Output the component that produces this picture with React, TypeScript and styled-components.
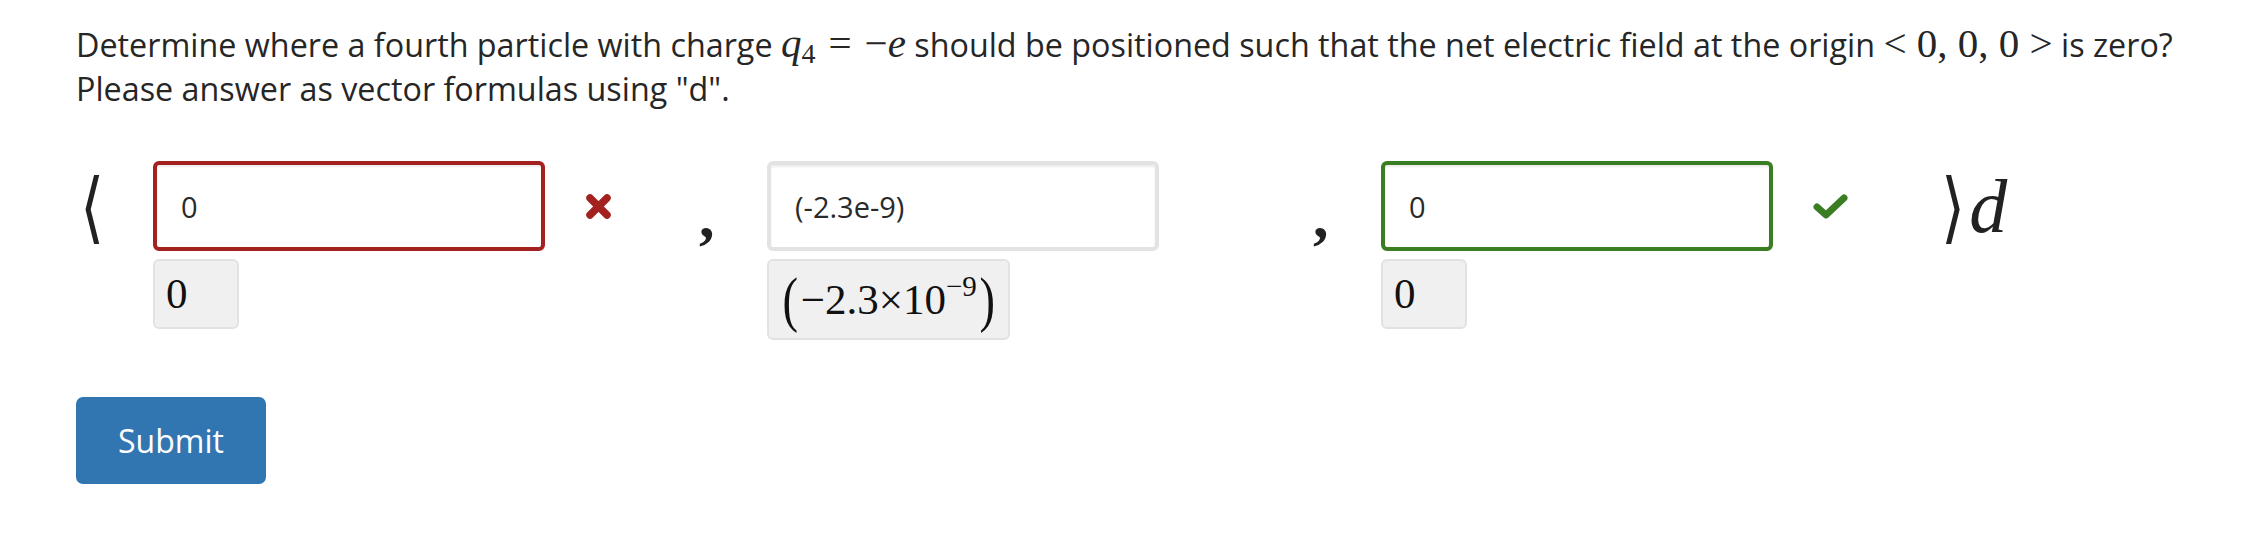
import React from "react";
import styled, { createGlobalStyle } from "styled-components";

const GlobalStyle = createGlobalStyle`
  body {
    margin: 0;
    background: #fff;
    font-family: "Open Sans", "Liberation Sans", sans-serif;
    color: #262626;
  }
`;

const RED = "#a3221f";
const GREEN = "#3b7d23";

const Page = styled.div`
  padding: 22px 30px 40px 76px;
`;

const Question = styled.p`
  margin: 0;
  font-size: 32.3px;
  line-height: 44px;
`;

const M = styled.span`
  font-family: "Liberation Serif", "DejaVu Serif", serif;
  font-size: 41px;
  line-height: 1;
`;

const Mi = styled.i`
  font-family: "Liberation Serif", "DejaVu Serif", serif;
  font-size: 41px;
  line-height: 1;
`;

const Sub = styled.sub`
  font-size: 28px;
  vertical-align: -6px;
  line-height: 0;
`;

const Op = styled.span`
  font-family: "Liberation Serif", "DejaVu Serif", serif;
  font-size: 41px;
  line-height: 1;
  margin: 0 13px;
`;

const AnswerRow = styled.div`
  display: flex;
  align-items: flex-start;
  margin-top: 51px;
`;

const Angle = styled.span<{ $side: "left" | "right" }>`
  display: flex;
  align-items: center;
  justify-content: flex-start;
  height: 90px;
  width: ${(p) => (p.$side === "left" ? "77px" : "auto")};
  padding-left: ${(p) => (p.$side === "left" ? "4px" : "0")};
  box-sizing: border-box;
  font-family: "DejaVu Sans", sans-serif;
  font-size: 62px;
  color: #222;
  transform: scaleY(1.25);
  transform-origin: center;
`;

const Dee = styled.i`
  display: flex;
  align-items: center;
  height: 90px;
  margin-left: 4px;
  font-family: "Liberation Serif", serif;
  font-size: 76px;
  color: #222;
`;

const Field = styled.div`
  display: flex;
  align-items: flex-start;
`;

const Stack = styled.div`
  display: flex;
  flex-direction: column;
  align-items: flex-start;
  gap: 8px;
`;

const Input = styled.input<{ $state?: "wrong" | "right" }>`
  width: 392px;
  height: 90px;
  box-sizing: border-box;
  padding: 0 24px;
  border: 4px solid
    ${(p) => (p.$state === "wrong" ? RED : p.$state === "right" ? GREEN : "#e3e3e3")};
  border-radius: 6px;
  box-shadow: inset 0 2px 2px rgba(0, 0, 0, 0.075);
  background: #fff;
  font-family: "Open Sans", sans-serif;
  font-size: 29px;
  color: #2a2a2a;
  outline: none;
`;

const IconSlot = styled.div<{ $w: number }>`
  width: ${(p) => p.$w}px;
  height: 90px;
  box-sizing: border-box;
  padding-left: 40px;
  display: flex;
  align-items: center;
`;

const Comma = styled.span`
  width: 58px;
  height: 90px;
  display: flex;
  align-items: center;
  font-family: "Liberation Serif", serif;
  font-weight: bold;
  font-size: 62px;
  line-height: 1;
  padding-top: 20px;
  box-sizing: border-box;
  color: #222;
`;

const CommaGlyph = styled.span`
  margin-left: -10px;
`;

const Preview = styled.div`
  min-width: 86px;
  box-sizing: border-box;
  padding: 10px 11px;
  background: #f0f0f0;
  border: 2px solid #e2e2e2;
  border-radius: 6px;
  font-family: "Liberation Serif", serif;
  font-size: 43px;
  line-height: 46px;
  color: #111;
  white-space: nowrap;
`;

const Paren = styled.span`
  font-size: 62px;
  line-height: 57px;
  display: inline-block;
  vertical-align: -6px;
  transform: scaleX(0.75);
`;

const Sup = styled.sup`
  font-size: 29px;
  line-height: 0;
  vertical-align: 18px;
`;

const SubmitButton = styled.button`
  margin-top: 57px;
  width: 190px;
  height: 87px;
  border: none;
  border-radius: 7px;
  background: #3176b1;
  color: #fff;
  font-family: "Open Sans", sans-serif;
  font-size: 32px;
  cursor: pointer;
`;

const Cross = () => (
  <svg width="27" height="27" viewBox="0 0 27 27">
    <path
      d="M5 5 L22 22 M22 5 L5 22"
      stroke={RED}
      strokeWidth="7.5"
      strokeLinecap="round"
      fill="none"
    />
  </svg>
);

const Check = () => (
  <svg width="36" height="28" viewBox="0 0 36 28">
    <path
      d="M4 15 L13 23 L31 6"
      stroke={GREEN}
      strokeWidth="7"
      strokeLinecap="round"
      strokeLinejoin="round"
      fill="none"
    />
  </svg>
);

export default function App() {
  return (
    <>
      <GlobalStyle />
      <Page>
        <Question>
          Determine where a fourth particle with charge{" "}
          <Mi>q</Mi>
          <M>
            <Sub>4</Sub>
          </M>
          <Op>=</Op>
          <M>−</M>
          <Mi>e</Mi> should be positioned such that the net electric field at
          the origin <M>&lt; 0, 0, 0 &gt;</M> is zero?
          <br />
          Please answer as vector formulas using "d".
        </Question>

        <AnswerRow>
          <Angle $side="left">⟨</Angle>
          <Field>
            <Stack>
              <Input $state="wrong" defaultValue="0" readOnly />
              <Preview>0</Preview>
            </Stack>
            <IconSlot $w={164}>
              <Cross />
            </IconSlot>
          </Field>
          <Comma>
            <CommaGlyph>,</CommaGlyph>
          </Comma>
          <Field>
            <Stack>
              <Input defaultValue="(-2.3e-9)" readOnly />
              <Preview>
                <Paren>(</Paren>
                −2.3×10<Sup>−9</Sup>
                <Paren>)</Paren>
              </Preview>
            </Stack>
            <IconSlot $w={164} />
          </Field>
          <Comma>
            <CommaGlyph>,</CommaGlyph>
          </Comma>
          <Field>
            <Stack>
              <Input $state="right" defaultValue="0" readOnly />
              <Preview>0</Preview>
            </Stack>
            <IconSlot $w={168}>
              <Check />
            </IconSlot>
          </Field>
          <Angle $side="right">⟩</Angle>
          <Dee>d</Dee>
        </AnswerRow>

        <SubmitButton>Submit</SubmitButton>
      </Page>
    </>
  );
}
